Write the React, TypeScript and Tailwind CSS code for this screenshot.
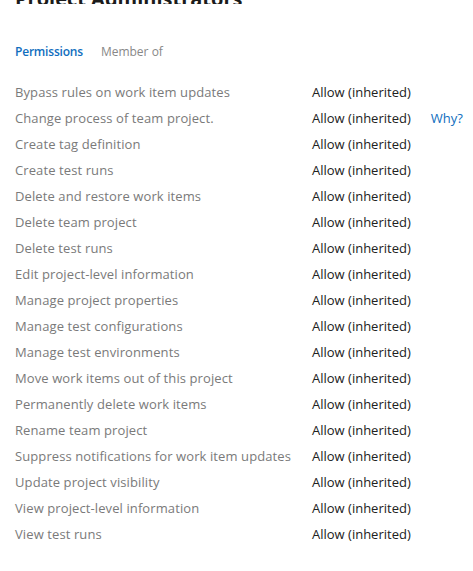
const permissions = [
  'Bypass rules on work item updates',
  'Change process of team project.',
  'Create tag definition',
  'Create test runs',
  'Delete and restore work items',
  'Delete team project',
  'Delete test runs',
  'Edit project-level information',
  'Manage project properties',
  'Manage test configurations',
  'Manage test environments',
  'Move work items out of this project',
  'Permanently delete work items',
  'Rename team project',
  'Suppress notifications for work item updates',
  'Update project visibility',
  'View project-level information',
  'View test runs',
];

export default function App() {
  return (
    <div className="min-h-screen bg-white font-['Open_Sans',sans-serif] text-[13px]">
      <div className="h-[4px] overflow-hidden flex items-end px-[15px]">
        <h1 className="text-[20px] font-bold text-[#1b1b1b] leading-none -mb-[5px] whitespace-nowrap">Project Administrators</h1>
      </div>
      <div className="flex items-center gap-[18px] px-[15px] mt-[39px] h-[18px]">
        <span className="font-semibold text-[#106ebe] text-[12px] tracking-[-0.2px]">Permissions</span>
        <span className="text-[#888] text-[12px]">Member of</span>
      </div>
      <div className="mt-[19px] px-[15px]">
        {permissions.map((p, i) => (
          <div key={p} className="flex items-center h-[26px] whitespace-nowrap">
            <span className="w-[297px] shrink-0 text-[#7a7a7a] tracking-[0.1px]">{p}</span>
            <span className="shrink-0 text-[#212121]">Allow (inherited)</span>
            {i === 1 && <span className="ml-[20px] text-[#106ebe]">Why?</span>}
          </div>
        ))}
      </div>
    </div>
  );
}
